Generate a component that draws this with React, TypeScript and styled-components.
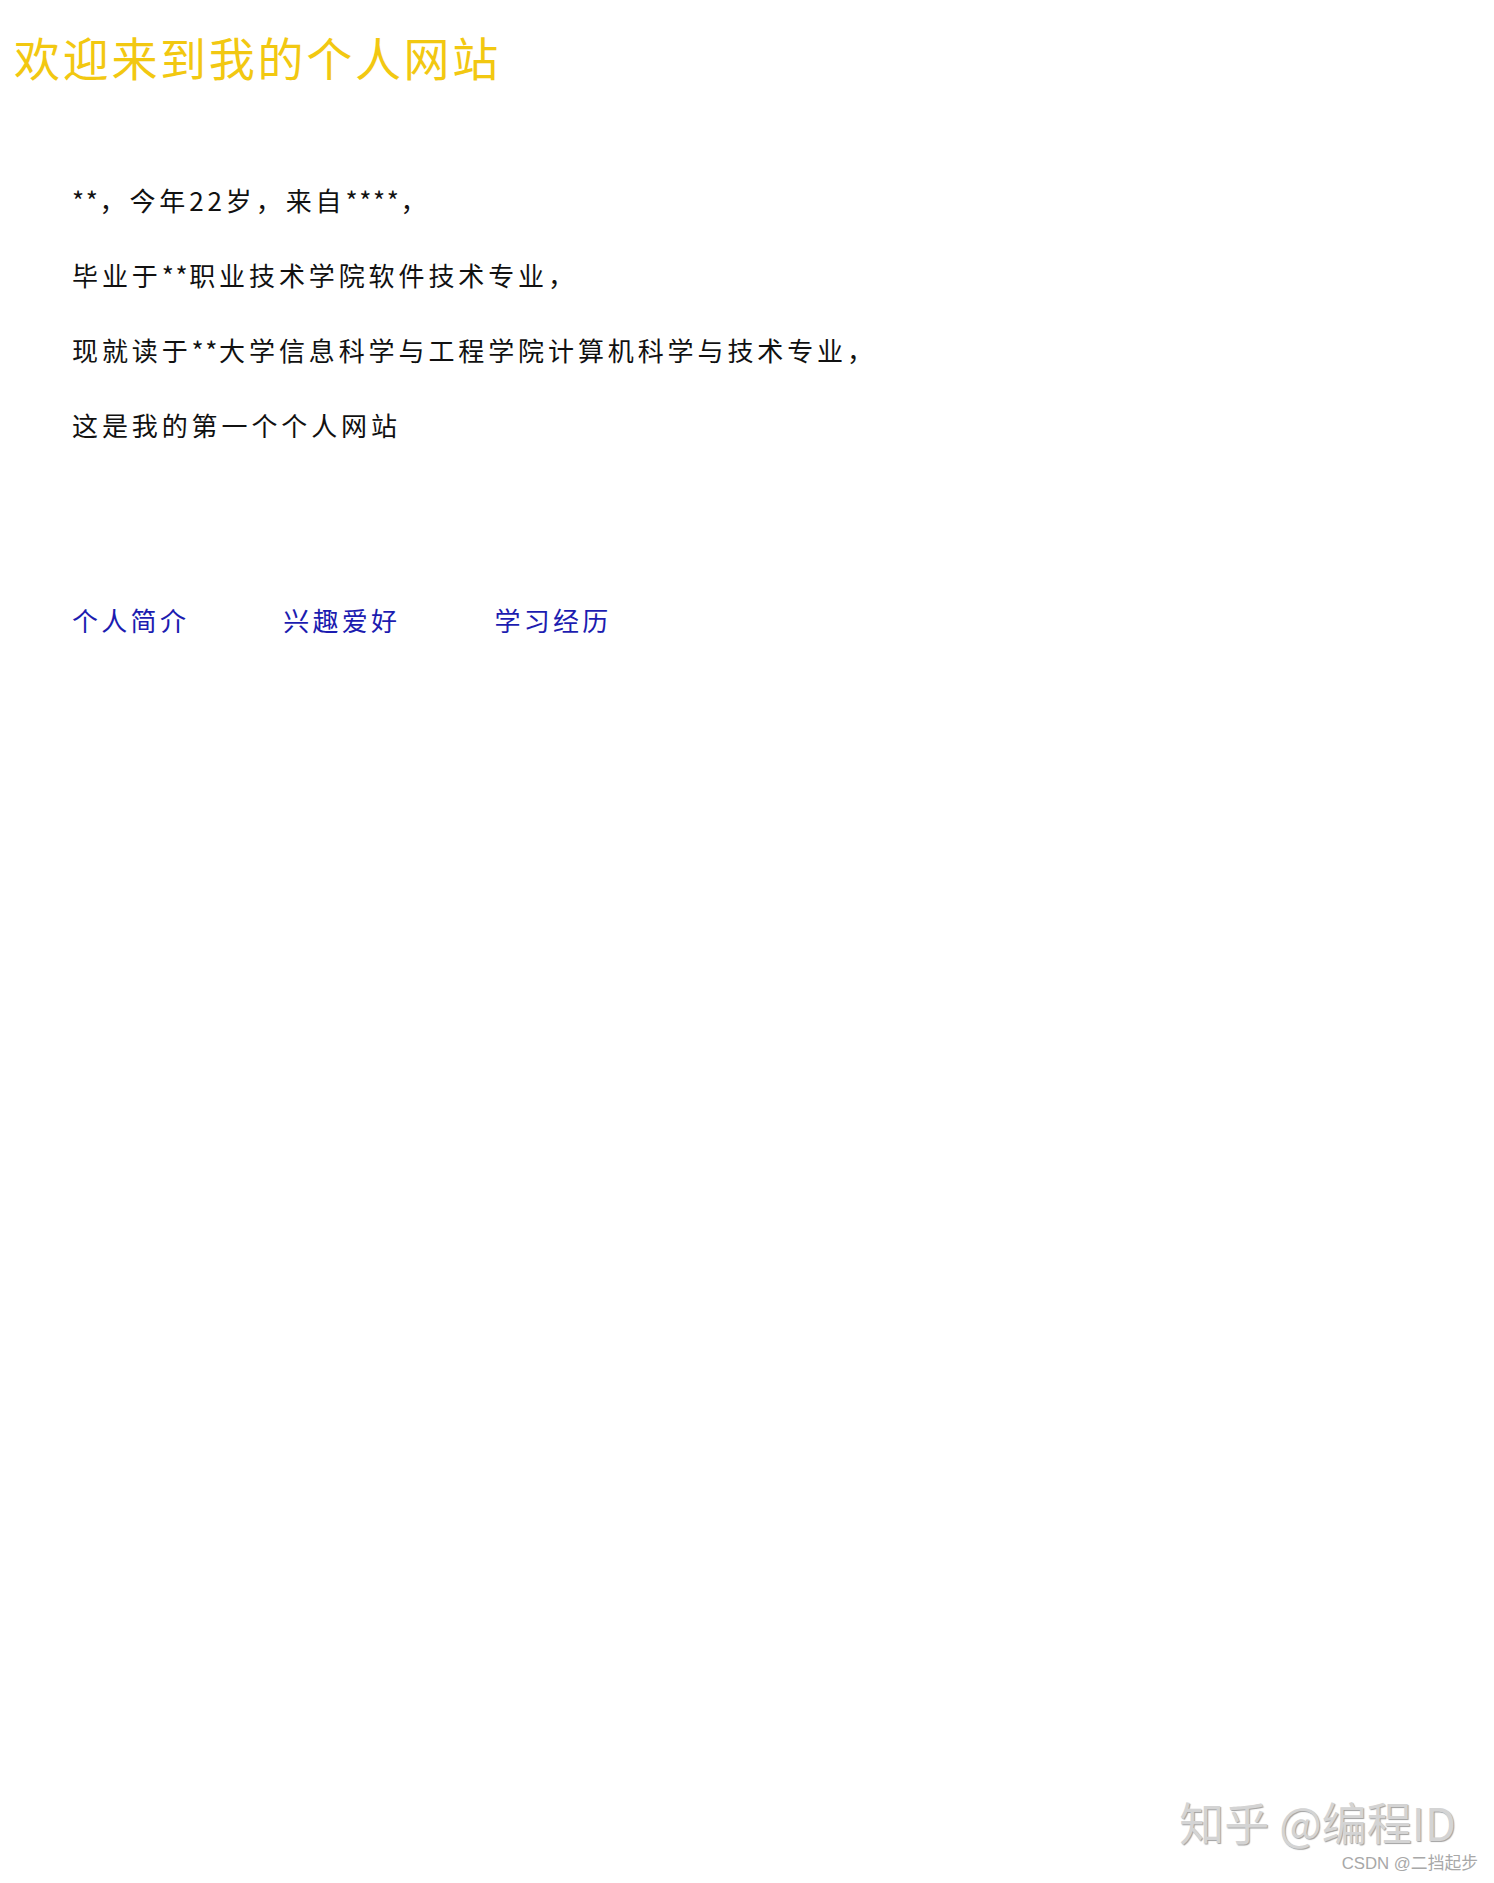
import styled, { createGlobalStyle } from "styled-components";

const GlobalStyle = createGlobalStyle`
  html, body {
    margin: 0;
    padding: 0;
    background: #ffffff;
  }
  body {
    font-family: "Noto Sans CJK SC", "Liberation Sans", sans-serif;
  }
`;

const Page = styled.div`
  position: relative;
  min-height: 1883px;
  padding: 26px 0 0 14px;
  box-sizing: border-box;
  overflow: hidden;
`;

const Title = styled.h1`
  margin: 0;
  font-size: 46px;
  font-weight: 400;
  line-height: 60px;
  letter-spacing: 2.7px;
  color: #f2c811;
`;

const Intro = styled.div`
  padding: 92px 0 0 58px;
`;

const Line = styled.p`
  margin: 0 0 31px;
  font-size: 26px;
  line-height: 44px;
  letter-spacing: 3.9px;
  color: #111111;
`;

const Stars = styled.span`
  letter-spacing: 1.6px;
`;

const Nav = styled.nav`
  display: flex;
  gap: 94px;
  padding: 120px 0 0 58px;
`;

const NavLink = styled.a`
  font-size: 26px;
  line-height: 44px;
  letter-spacing: 3.3px;
  color: #1c1cb0;
  text-decoration: none;
`;

const Watermark = styled.div`
  position: absolute;
  right: 16px;
  bottom: 9px;
  display: flex;
  flex-direction: column;
  align-items: flex-end;
  gap: 5px;
  pointer-events: none;
`;

const Brand = styled.span`
  font-size: 45px;
  line-height: 54px;
  color: #d4d4d4;
  text-shadow: 1px 1px 1px #a0a0a0;
  margin-right: 22px;
`;

const Credit = styled.span`
  font-family: "Liberation Sans", "Noto Sans CJK SC", sans-serif;
  font-size: 16.8px;
  line-height: 20px;
  color: #a8a8a8;
`;

const lines = [
  "**，今年22岁，来自****，",
  "毕业于**职业技术学院软件技术专业，",
  "现就读于**大学信息科学与工程学院计算机科学与技术专业，",
  "这是我的第一个个人网站",
];

const links = ["个人简介", "兴趣爱好", "学习经历"];

// split a line so the runs of asterisks can be spaced tighter than the CJK text
const renderLine = (text: string) =>
  text.split(/(\*+)/).map((part, i) =>
    part.startsWith("*") ? <Stars key={i}>{part}</Stars> : part
  );

export default function App() {
  return (
    <>
      <GlobalStyle />
      <Page>
        <Title>欢迎来到我的个人网站</Title>
        <Intro>
          {lines.map((text) => (
            <Line key={text}>{renderLine(text)}</Line>
          ))}
        </Intro>
        <Nav>
          {links.map((text) => (
            <NavLink key={text} href="#">
              {text}
            </NavLink>
          ))}
        </Nav>
        <Watermark>
          <Brand>知乎 @编程ID</Brand>
          <Credit>CSDN @二挡起步</Credit>
        </Watermark>
      </Page>
    </>
  );
}
